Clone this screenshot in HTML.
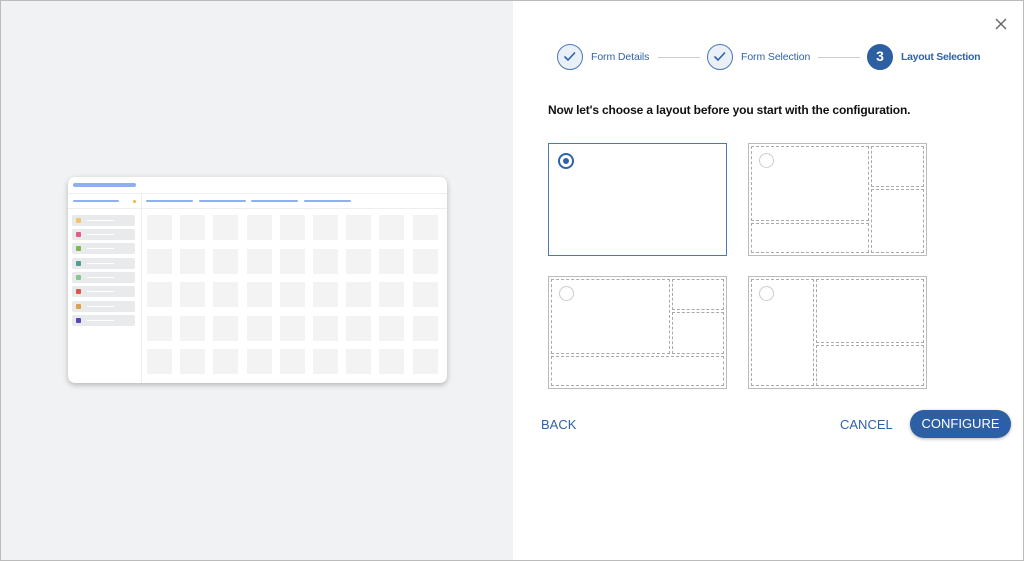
<!DOCTYPE html><html><head><style>
*{box-sizing:border-box;margin:0;padding:0}
body{width:1024px;height:561px;overflow:hidden;font-family:"Liberation Sans",sans-serif;background:#fff;position:relative}
.left{position:absolute;left:0;top:0;width:513px;height:561px;background:#f1f2f4}
.card{position:absolute;left:68px;top:177px;width:379px;height:206px;background:#fff;border-radius:7px;box-shadow:0 2px 6px rgba(0,0,0,.25);overflow:hidden}
.a{position:absolute}
.bl{background:#8fb0f0;height:3px;border-radius:2px}
.cell{position:absolute;width:25px;height:25px;background:#f3f3f3}
.side{position:absolute;left:4px;width:63px;height:11px;background:#e9eaeb;border-radius:2px}
.side i{position:absolute;left:4px;top:3px;width:5px;height:5px;border-radius:1px}
.side b{position:absolute;left:15px;top:5px;width:27px;height:1px;background:#fff}
.step{position:absolute;top:44px;width:26px;height:26px;border-radius:50%;border:1.5px solid #4b78b5;background:#eaf0f8}
.lab{position:absolute;top:51px;font-size:10.5px;color:#2f63a8;letter-spacing:-0.1px}
.line{position:absolute;top:57px;height:1px;background:#ccc}
.box{position:absolute;width:179px;height:113px;border:1.5px solid #bbb}
.box .d{position:absolute;border:1px dashed #aaa}
.radio{position:absolute;left:10px;top:9px;width:15px;height:15px;border-radius:50%;border:1.5px solid #ccc}
.btn{position:absolute;font-size:13px;color:#2f63a8;top:417px}
</style></head><body>
<div class="left"></div>
<div class="card">
<div class="a bl" style="left:5px;top:6px;width:63px;height:4px"></div>
<div class="a" style="left:0;top:16px;width:379px;height:1px;background:#eee"></div>
<div class="a" style="left:0;top:31px;width:379px;height:1px;background:#eee"></div>
<div class="a" style="left:73px;top:16px;width:1px;height:190px;background:#eee"></div>
<div class="a bl" style="left:5px;top:23px;width:46px;height:2px"></div>
<div class="a" style="left:65px;top:23px;width:3px;height:3px;border-radius:50%;background:#f3b24a"></div>
<div class="a bl" style="left:78px;top:23px;width:47px;height:2px"></div>
<div class="a bl" style="left:131px;top:23px;width:47px;height:2px"></div>
<div class="a bl" style="left:183px;top:23px;width:47px;height:2px"></div>
<div class="a bl" style="left:236px;top:23px;width:47px;height:2px"></div>
<div class="side" style="top:38px"><i style="background:#f2c46d"></i><b></b></div>
<div class="side" style="top:52px"><i style="background:#e05d86"></i><b></b></div>
<div class="side" style="top:66px"><i style="background:#7cb84f"></i><b></b></div>
<div class="side" style="top:81px"><i style="background:#4e9e8f"></i><b></b></div>
<div class="side" style="top:95px"><i style="background:#86c68d"></i><b></b></div>
<div class="side" style="top:109px"><i style="background:#d9584c"></i><b></b></div>
<div class="side" style="top:124px"><i style="background:#d9a24c"></i><b></b></div>
<div class="side" style="top:138px"><i style="background:#5448b5"></i><b></b></div>
<div id="g"></div>
</div>
<script>
var g=document.getElementById('g'),h='';
for(var r=0;r<5;r++)for(var c=0;c<9;c++)h+='<div class="cell" style="left:'+(79+c*33.2)+'px;top:'+(38+r*33.5)+'px"></div>';
g.innerHTML=h;
</script>
<svg class="a" style="left:995px;top:18px" width="12" height="12" viewBox="0 0 12 12"><path d="M1 1L11 11M11 1L1 11" stroke="#666" stroke-width="1.4"/></svg>
<div class="step" style="left:557px"><svg width="23" height="23" viewBox="0 0 23 23"><path d="M6.5 11.5l3.5 3.5 7-7.5" fill="none" stroke="#2f63a8" stroke-width="1.6"/></svg></div>
<div class="lab" style="left:591px">Form Details</div>
<div class="line" style="left:658px;width:42px"></div>
<div class="step" style="left:707px"><svg width="23" height="23" viewBox="0 0 23 23"><path d="M6.5 11.5l3.5 3.5 7-7.5" fill="none" stroke="#2f63a8" stroke-width="1.6"/></svg></div>
<div class="lab" style="left:741px">Form Selection</div>
<div class="line" style="left:818px;width:42px"></div>
<div class="step" style="left:867px;background:#2d5fa3;border-color:#2d5fa3;color:#fff;font-weight:bold;font-size:14px;text-align:center;line-height:23px">3</div>
<div class="lab" style="left:901px;font-weight:bold;letter-spacing:-0.3px">Layout Selection</div>
<div class="a" style="left:548px;top:103px;font-size:12px;font-weight:bold;color:#111;letter-spacing:-0.15px">Now let's choose a layout before you start with the configuration.</div>
<div class="box" style="left:548px;top:143px;border-color:#4b78b5"><div class="radio" style="left:9px;top:9px;border-color:#2f63a8;border-width:2px;width:16px;height:16px"><div style="position:absolute;left:3px;top:3px;width:6px;height:6px;border-radius:50%;background:#2f63a8"></div></div></div>
<div class="box" style="left:748px;top:143px">
<div class="d" style="left:2px;top:2px;width:118px;height:75px"></div>
<div class="d" style="left:2px;top:79px;width:118px;height:30px"></div>
<div class="d" style="left:122px;top:2px;width:53px;height:41px"></div>
<div class="d" style="left:122px;top:45px;width:53px;height:64px"></div>
<div class="radio"></div></div>
<div class="box" style="left:548px;top:276px">
<div class="d" style="left:2px;top:2px;width:119px;height:75px"></div>
<div class="d" style="left:123px;top:2px;width:52px;height:31px"></div>
<div class="d" style="left:123px;top:35px;width:52px;height:42px"></div>
<div class="d" style="left:2px;top:79px;width:173px;height:30px"></div>
<div class="radio"></div></div>
<div class="box" style="left:748px;top:276px">
<div class="d" style="left:2px;top:2px;width:63px;height:107px"></div>
<div class="d" style="left:67px;top:2px;width:108px;height:64px"></div>
<div class="d" style="left:67px;top:68px;width:108px;height:41px"></div>
<div class="radio"></div></div>
<div class="btn" style="left:541px">BACK</div>
<div class="btn" style="left:840px">CANCEL</div>
<div class="a" style="left:910px;top:410px;width:101px;height:28px;border-radius:14px;background:#2d5fa3;color:#fff;font-size:13px;text-align:center;line-height:28px;box-shadow:0 1px 3px rgba(0,0,0,.3)">CONFIGURE</div>
<div class="a" style="left:0;top:0;width:1024px;height:561px;border:1px solid #bbb"></div>
</body></html>
